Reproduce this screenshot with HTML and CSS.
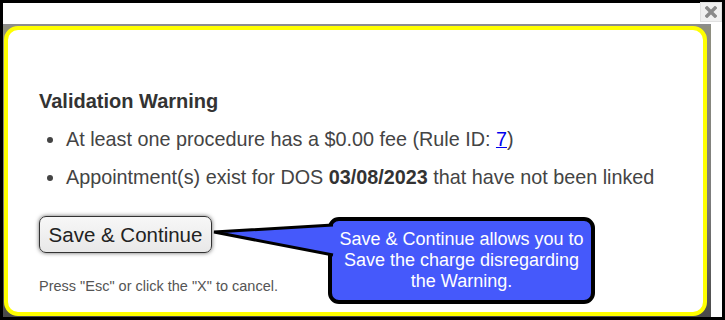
FILE: index.html
```html
<!DOCTYPE html>
<html lang="en">
<head>
  <meta charset="UTF-8">
  <title>Validation Warning</title>
  <link rel="stylesheet" href="styles.css">
</head>
<body>

  <div class="frame">
    <!-- Top bar with close button -->
    <div class="topbar">
      <span class="close-btn" title="Close">
        <svg width="12" height="12" viewBox="0 0 12 12">
          <path d="M2 2 L10 10 M10 2 L2 10" stroke="#8a8a8a" stroke-width="3.4" stroke-linecap="square"/>
        </svg>
      </span>
    </div>

    <!-- Dialog -->
    <div class="dialog-wrap">
      <div class="dialog">
        <h2>Validation Warning</h2>
        <ul class="warnings">
          <li>At least one procedure has a $0.00 fee (Rule ID: <a href="#">7</a>)</li>
          <li>Appointment(s) exist for DOS <b>03/08/2023</b> that have not been linked</li>
        </ul>
        <button class="save-btn">Save &amp; Continue</button>
        <p class="hint">Press "Esc" or click the "X" to cancel.</p>

        <!-- Callout -->
        <svg class="callout-pointer" width="126" height="46" viewBox="0 0 126 46">
          <polygon points="3,17 126,10 126,41" fill="#4559fb"/>
          <polyline points="122,10 3,17 122,40" fill="none" stroke="#000" stroke-width="3" stroke-linejoin="miter"/>
        </svg>
        <div class="callout">
          Save &amp; Continue allows you to<br>
          Save the charge disregarding<br>
          the Warning.
        </div>
      </div>
    </div>
  </div>

</body>
</html>
```

FILE: styles.css
```css
body {
  margin: 0;
  padding: 0;
  font-family: "Liberation Sans", Arial, sans-serif;
  background-color: #fff;
}

.frame {
  width: 725px;
  height: 320px;
  box-sizing: border-box;
  border: 3px solid #000;
  background-color: #fff;
  display: flex;
  flex-direction: column;
}

/* Top bar */
.topbar {
  height: 21px;
  display: flex;
  justify-content: flex-end;
  align-items: flex-start;
}

.close-btn {
  width: 22px;
  height: 20px;
  margin-top: -1px;
  background-color: #f0f0f0;
  border: 1px solid #e0e0e0;
  box-sizing: border-box;
  display: flex;
  align-items: center;
  justify-content: center;
  cursor: pointer;
}

/* Dialog */
.dialog-wrap {
  flex: 1;
  margin-right: 11px;
  border-top: 2px solid #8d8d8d;
  padding: 0 4px 1px 1px;
  background: linear-gradient(to bottom, #8f8f80, #7d7d7d 60%, #4a4a4a);
  display: flex;
}

.dialog {
  flex: 1;
  position: relative;
  background-color: #fff;
  border: 4px solid #ffff00;
  border-radius: 14px;
  padding: 60px 0 0 31px;
  color: #444;
}

.dialog h2 {
  margin: 0;
  font-size: 20px;
  font-weight: bold;
  color: #333;
  line-height: 22px;
}

.warnings {
  margin: 16px 0 0 0;
  padding-left: 27px;
  font-size: 19.8px;
  line-height: 22px;
}

.warnings li {
  margin-bottom: 16px;
}

.warnings b {
  color: #333;
}

.warnings a {
  color: #0000ee;
}

.save-btn {
  margin-top: 12px;
  width: 173px;
  height: 37px;
  padding: 0;
  font-family: "Liberation Sans", Arial, sans-serif;
  font-size: 20.5px;
  color: #222;
  background: linear-gradient(to bottom, #f7f7f7, #e8e8e8);
  border: 1px solid #333;
  border-radius: 7px;
  box-shadow: 0 0 4px rgba(0, 0, 0, 0.6);
  cursor: pointer;
}

.hint {
  margin: 25px 0 0 0;
  font-size: 14.5px;
  color: #555;
}

/* Callout annotation */
.callout {
  position: absolute;
  left: 320px;
  top: 187px;
  width: 267px;
  height: 87px;
  box-sizing: border-box;
  padding-top: 8px;
  background-color: #4559fb;
  border: 4px solid #000;
  border-radius: 11px;
  color: #fff;
  font-size: 18px;
  line-height: 21px;
  text-align: center;
}

.callout-pointer {
  position: absolute;
  left: 203px;
  top: 185px;
  z-index: 2;
}
```
